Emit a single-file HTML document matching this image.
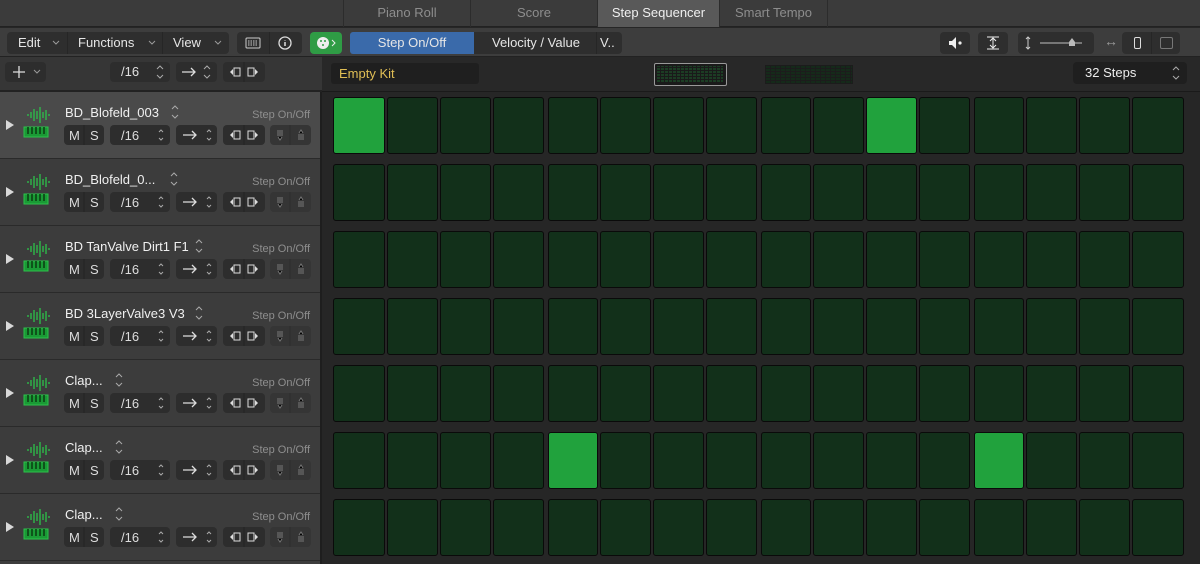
<!DOCTYPE html>
<html><head><meta charset="utf-8"><style>
*{box-sizing:border-box;margin:0;padding:0}
body{width:1200px;height:564px;overflow:hidden;background:#262626;font-family:"Liberation Sans",sans-serif;position:relative;color:#ddd}
.a{position:absolute}
.tabs{left:0;top:0;width:1200px;height:27px;background:#3b3b3b;border-bottom:1px solid #222}
.tab{top:0;height:27px;line-height:26px;text-align:center;font-size:13px;color:#8d8d8d;border-left:1px solid #2c2c2c}
.bar2{left:0;top:28px;width:1200px;height:29px;background:#3d3d3d;border-bottom:1px solid #222}
.btn{background:#2e2e2e;border-radius:4px;height:22px;top:32px;font-size:13px;color:#e6e6e6;line-height:22px}
.bar3l{left:0;top:57px;width:322px;height:35px;background:#363636;border-bottom:2px solid #222}
.bar3r{left:322px;top:57px;width:878px;height:35px;background:#282828;border-bottom:1px solid #1a1a1a}
.left{left:0;top:92px;width:322px;height:472px;background:#3c3c3c;border-right:2px solid #1e1e1e}
.row{position:absolute;left:0;width:320px;height:67px;border-bottom:1px solid #2a2a2a}
.sb{position:absolute;background:#2d2d2d;border-radius:4px;height:20px;font-size:13px;color:#e0e0e0;line-height:20px}
.name{position:absolute;left:65px;top:13px;font-size:13px;color:#f0f0f0}
.so{position:absolute;right:10px;top:17px;font-size:11px;color:#8e8e8e}
.tri{position:absolute;left:6px;top:28px;width:0;height:0;border-left:8px solid #d8d8d8;border-top:5px solid transparent;border-bottom:5px solid transparent}
.cell{position:absolute;background:#12301a;border:1px solid #0a0a0a;border-radius:3px;height:57px}
.on{background:#21a23d}
svg.i{position:absolute}
</style></head><body>
<div class="a tabs"></div>
<div class="a tab" style="left:343px;width:127px">Piano Roll</div>
<div class="a tab" style="left:470px;width:127px">Score</div>
<div class="a tab" style="left:597px;width:122px;background:#595959;color:#f0f0f0">Step Sequencer</div>
<div class="a tab" style="left:719px;width:109px;border-right:1px solid #2c2c2c">Smart Tempo</div>
<div class="a bar2"></div>
<div class="a btn" style="left:7px;width:222px">
<span style="position:absolute;left:11px">Edit</span>
<span style="position:absolute;left:60px;top:0;width:1px;height:22px;background:#262626"></span>
<span style="position:absolute;left:71px">Functions</span>
<span style="position:absolute;left:155px;top:0;width:1px;height:22px;background:#262626"></span>
<span style="position:absolute;left:166px">View</span>
<svg class="i" style="left:0;top:0" width="222" height="22"><path d="M46 9l3 3 3-3M142 9l3 3 3-3M208 9l3 3 3-3" stroke="#999" fill="none"/></svg>
</div>
<div class="a btn" style="left:237px;width:65px">
<span style="position:absolute;left:32px;top:0;width:1px;height:22px;background:#262626"></span>
<svg class="i" style="left:0;top:0" width="65" height="22"><rect x="9" y="6" width="14" height="10" rx="1" stroke="#ccc" fill="none"/><path d="M11 9h10M11 11h10M11 13h10" stroke="#ccc" stroke-dasharray="1.5 1" /><circle cx="48" cy="11" r="6" stroke="#ddd" fill="none" stroke-width="1.3"/><path d="M48 10v4M48 8v0.5" stroke="#ddd" stroke-width="1.5"/></svg>
</div>
<div class="a btn" style="left:310px;width:32px;background:#2f9c45"><svg class="i" width="32" height="22"><circle cx="13" cy="11" r="6" fill="#eee"/><circle cx="11" cy="9" r="1" fill="#2f9c45"/><circle cx="15" cy="9" r="1" fill="#2f9c45"/><circle cx="13" cy="13" r="1" fill="#2f9c45"/><path d="M22 8l3 3-3 3" stroke="#eee" fill="none"/></svg></div>
<div class="a btn" style="left:350px;width:124px;background:#3a6aaa;text-align:center;border-radius:3px 0 0 3px">Step On/Off</div>
<div class="a btn" style="left:474px;width:148px;border-radius:0 4px 4px 0"><span style="position:absolute;left:18px">Velocity / Value</span><span style="position:absolute;left:122px;top:0;width:1px;height:22px;background:#262626"></span><span style="position:absolute;left:126px">V..</span></div>
<div class="a btn" style="left:940px;width:30px"><svg class="i" width="30" height="22"><path d="M9 9h3l4-4v12l-4-4H9z" fill="#eee"/><circle cx="20" cy="11" r="1.6" fill="#eee"/></svg></div>
<div class="a btn" style="left:978px;width:30px"><svg class="i" width="30" height="22"><path d="M9 5h12M9 17h12M15 6v10M12 9l3-3 3 3M12 13l3 3 3-3" stroke="#eee" fill="none"/></svg></div>
<div class="a btn" style="left:1018px;width:76px"><svg class="i" width="76" height="22"><path d="M10 5v12M8 7l2-2 2 2M8 15l2 2 2-2" stroke="#ccc" fill="none"/><path d="M22 11h42" stroke="#777" stroke-width="2"/><path d="M51 14v-4l3-4 3 4v4z" fill="#bbb"/></svg></div>
<div class="a" style="left:1104px;top:33px;color:#999;font-size:14px">↔</div>
<div class="a btn" style="left:1122px;width:58px"><span style="position:absolute;left:12px;top:5px;width:7px;height:12px;border:1.5px solid #ddd;border-radius:2px"></span><span style="position:absolute;left:29px;top:0;width:1px;height:22px;background:#262626"></span><span style="position:absolute;left:38px;top:5px;width:13px;height:12px;border:1.5px solid #777;border-radius:2px"></span></div>
<div class="a bar3l"></div><div class="a bar3r"></div>
<div class="a sb" style="left:5px;top:62px;width:41px"><svg class="i" width="41" height="20"><path d="M8 10h12M14 4v12" stroke="#ddd" stroke-width="1.3"/><path d="M29 8l3 3 3-3" stroke="#999" fill="none"/></svg></div>
<div class="a sb" style="left:110px;top:62px;width:60px"><span style="position:absolute;left:11px">/16</span><svg class="i" width="60" height="20"><path d="M47 7l3-3 3 3M47 13l3 3 3-3" stroke="#aaa" fill="none"/></svg></div>
<div class="a sb" style="left:176px;top:62px;width:41px"><svg class="i" width="41" height="20"><path d="M6 10h13M15 6l4 4-4 4" stroke="#ddd" fill="none" stroke-width="1.3"/><path d="M28 7l3-3 3 3M28 13l3 3 3-3" stroke="#aaa" fill="none"/></svg></div>
<div class="a sb" style="left:223px;top:62px;width:42px"><svg class="i" width="42" height="20"><path d="M7 10l3-3v6z" fill="#ddd"/><rect x="11" y="6" width="6" height="8" stroke="#ddd" fill="none"/><line x1="21" y1="0" x2="21" y2="20" stroke="#222"/><rect x="25" y="6" width="6" height="8" stroke="#ddd" fill="none"/><path d="M35 10l-3-3v6z" fill="#ddd"/></svg></div>
<div class="a" style="left:331px;top:63px;width:148px;height:21px;background:#1f1f1f;border-radius:3px;color:#e0be55;font-size:13px;line-height:21px;padding-left:8px">Empty Kit</div>
<div class="a" style="left:654px;top:63px;width:73px;height:23px;border:1.5px solid #999;border-radius:2px;background:#1a1a1a"><div style="position:absolute;left:2px;top:2px;width:66px;height:16px;background:repeating-linear-gradient(90deg,transparent 0 3px,#1a1a1a 3px 4px),repeating-linear-gradient(0deg,#1c3d24 0 2px,#1a1a1a 2px 3px)"></div></div>
<div class="a" style="left:765px;top:65px;width:88px;height:19px;background:#1c1c1c"><div style="position:absolute;left:1px;top:1px;width:86px;height:17px;background:repeating-linear-gradient(90deg,transparent 0 4px,#1c1c1c 4px 5px),repeating-linear-gradient(0deg,#152a1a 0 2px,#1c1c1c 2px 3px)"></div></div>
<div class="a" style="left:1073px;top:62px;width:114px;height:22px;background:#1f1f1f;border-radius:4px;color:#eee;font-size:13px;line-height:22px;padding-left:12px">32 Steps<svg class="i" style="left:0;top:0" width="114" height="22"><path d="M100 8l3-3 3 3M100 14l3 3 3-3" stroke="#aaa" fill="none"/></svg></div>
<div class="a left">
<div class="row" style="top:0;background:#4a4a4a"><div class="tri"></div><div class="name">BD_Blofeld_003</div><div class="so">Step On/Off</div></div>
<div class="row" style="top:67px"><div class="tri"></div><div class="name">BD_Blofeld_0...</div><div class="so">Step On/Off</div></div>
<div class="row" style="top:134px"><div class="tri"></div><div class="name">BD TanValve Dirt1 F1</div><div class="so">Step On/Off</div></div>
<div class="row" style="top:201px"><div class="tri"></div><div class="name">BD 3LayerValve3 V3</div><div class="so">Step On/Off</div></div>
<div class="row" style="top:268px"><div class="tri"></div><div class="name">Clap...</div><div class="so">Step On/Off</div></div>
<div class="row" style="top:335px"><div class="tri"></div><div class="name">Clap...</div><div class="so">Step On/Off</div></div>
<div class="row" style="top:402px"><div class="tri"></div><div class="name">Clap...</div><div class="so">Step On/Off</div></div>
</div>
<svg class="a" style="left:0;top:92px" width="322" height="472">
<defs><g id="ctl">
<path d="M31 6v6M34 3v12M37 5v8M40 1v16M43 6v6M46 4v10M28 8v2M49 8v2" stroke="#2cc24a" stroke-width="1.3"/>
<rect x="24" y="21" width="24" height="10" fill="#1a9a35" stroke="#2cc24a"/>
<path d="M28 21v7M32 21v7M36 21v7M40 21v7M44 21v7" stroke="#0a3a12" stroke-width="1.5"/>
<rect x="64" y="19" width="40" height="20" rx="4" fill="#2d2d2d"/><line x1="84" y1="19" x2="84" y2="39" stroke="#222"/>
<text x="69" y="34" fill="#ddd" font-size="13" font-family="Liberation Sans">M</text><text x="90" y="34" fill="#ddd" font-size="13" font-family="Liberation Sans">S</text>
<rect x="110" y="19" width="60" height="20" rx="4" fill="#2d2d2d"/><text x="121" y="34" fill="#ddd" font-size="13" font-family="Liberation Sans">/16</text>
<path d="M159 26l2-2 2 2M159 32l2 2 2-2" stroke="#aaa" fill="none"/>
<rect x="176" y="19" width="41" height="20" rx="4" fill="#2d2d2d"/><path d="M183 29h13M192 25l4 4-4 4" stroke="#ddd" fill="none" stroke-width="1.3"/>
<path d="M207 26l2-2 2 2M207 32l2 2 2-2" stroke="#aaa" fill="none"/>
<rect x="223" y="19" width="42" height="20" rx="4" fill="#2d2d2d"/><line x1="244" y1="19" x2="244" y2="39" stroke="#222"/>
<path d="M230 29l3-3v6z" fill="#ddd"/><rect x="234" y="25" width="6" height="8" stroke="#ddd" fill="none"/>
<rect x="248" y="25" width="6" height="8" stroke="#ddd" fill="none"/><path d="M258 29l-3-3v6z" fill="#ddd"/>
<rect x="270" y="19" width="41" height="20" rx="4" fill="#353535"/><line x1="290" y1="19" x2="290" y2="39" stroke="#2d2d2d"/>
<path d="M277 25h6M277 27h6M277 29h6M278 31l2 3 2-3" stroke="#777"/><path d="M298 33h6M298 31h6M298 29h6M299 27l2-3 2 3" stroke="#777"/>
</g>
<path id="ud" d="M0 3l3-3 3 3M0 9l3 3 3-3" stroke="#aaa" fill="none"/></defs>
<use href="#ctl" y="14"/><use href="#ctl" y="81"/><use href="#ctl" y="148"/><use href="#ctl" y="215"/><use href="#ctl" y="282"/><use href="#ctl" y="349"/><use href="#ctl" y="416"/>
<use href="#ud" x="172" y="14"/><use href="#ud" x="171" y="81"/><use href="#ud" x="196" y="148"/><use href="#ud" x="196" y="215"/><use href="#ud" x="116" y="282"/><use href="#ud" x="116" y="349"/><use href="#ud" x="116" y="416"/>
</svg>
<div class="a" style="left:324px;top:92px;width:876px;height:67px">
<div class="cell on" style="left:9px;top:5px;width:52px"></div><div class="cell" style="left:63px;top:5px;width:51px"></div><div class="cell" style="left:116px;top:5px;width:51px"></div><div class="cell" style="left:169px;top:5px;width:51px"></div><div class="cell" style="left:224px;top:5px;width:50px"></div><div class="cell" style="left:276px;top:5px;width:51px"></div><div class="cell" style="left:329px;top:5px;width:51px"></div><div class="cell" style="left:382px;top:5px;width:51px"></div><div class="cell" style="left:437px;top:5px;width:50px"></div><div class="cell" style="left:489px;top:5px;width:51px"></div><div class="cell on" style="left:542px;top:5px;width:51px"></div><div class="cell" style="left:595px;top:5px;width:51px"></div><div class="cell" style="left:650px;top:5px;width:50px"></div><div class="cell" style="left:702px;top:5px;width:51px"></div><div class="cell" style="left:755px;top:5px;width:51px"></div><div class="cell" style="left:808px;top:5px;width:52px"></div>
</div>
<div class="a" style="left:324px;top:159px;width:876px;height:67px"><div class="cell" style="left:9px;top:5px;width:52px"></div><div class="cell" style="left:63px;top:5px;width:51px"></div><div class="cell" style="left:116px;top:5px;width:51px"></div><div class="cell" style="left:169px;top:5px;width:51px"></div><div class="cell" style="left:224px;top:5px;width:50px"></div><div class="cell" style="left:276px;top:5px;width:51px"></div><div class="cell" style="left:329px;top:5px;width:51px"></div><div class="cell" style="left:382px;top:5px;width:51px"></div><div class="cell" style="left:437px;top:5px;width:50px"></div><div class="cell" style="left:489px;top:5px;width:51px"></div><div class="cell" style="left:542px;top:5px;width:51px"></div><div class="cell" style="left:595px;top:5px;width:51px"></div><div class="cell" style="left:650px;top:5px;width:50px"></div><div class="cell" style="left:702px;top:5px;width:51px"></div><div class="cell" style="left:755px;top:5px;width:51px"></div><div class="cell" style="left:808px;top:5px;width:52px"></div></div>
<div class="a" style="left:324px;top:226px;width:876px;height:67px"><div class="cell" style="left:9px;top:5px;width:52px"></div><div class="cell" style="left:63px;top:5px;width:51px"></div><div class="cell" style="left:116px;top:5px;width:51px"></div><div class="cell" style="left:169px;top:5px;width:51px"></div><div class="cell" style="left:224px;top:5px;width:50px"></div><div class="cell" style="left:276px;top:5px;width:51px"></div><div class="cell" style="left:329px;top:5px;width:51px"></div><div class="cell" style="left:382px;top:5px;width:51px"></div><div class="cell" style="left:437px;top:5px;width:50px"></div><div class="cell" style="left:489px;top:5px;width:51px"></div><div class="cell" style="left:542px;top:5px;width:51px"></div><div class="cell" style="left:595px;top:5px;width:51px"></div><div class="cell" style="left:650px;top:5px;width:50px"></div><div class="cell" style="left:702px;top:5px;width:51px"></div><div class="cell" style="left:755px;top:5px;width:51px"></div><div class="cell" style="left:808px;top:5px;width:52px"></div></div>
<div class="a" style="left:324px;top:293px;width:876px;height:67px"><div class="cell" style="left:9px;top:5px;width:52px"></div><div class="cell" style="left:63px;top:5px;width:51px"></div><div class="cell" style="left:116px;top:5px;width:51px"></div><div class="cell" style="left:169px;top:5px;width:51px"></div><div class="cell" style="left:224px;top:5px;width:50px"></div><div class="cell" style="left:276px;top:5px;width:51px"></div><div class="cell" style="left:329px;top:5px;width:51px"></div><div class="cell" style="left:382px;top:5px;width:51px"></div><div class="cell" style="left:437px;top:5px;width:50px"></div><div class="cell" style="left:489px;top:5px;width:51px"></div><div class="cell" style="left:542px;top:5px;width:51px"></div><div class="cell" style="left:595px;top:5px;width:51px"></div><div class="cell" style="left:650px;top:5px;width:50px"></div><div class="cell" style="left:702px;top:5px;width:51px"></div><div class="cell" style="left:755px;top:5px;width:51px"></div><div class="cell" style="left:808px;top:5px;width:52px"></div></div>
<div class="a" style="left:324px;top:360px;width:876px;height:67px"><div class="cell" style="left:9px;top:5px;width:52px"></div><div class="cell" style="left:63px;top:5px;width:51px"></div><div class="cell" style="left:116px;top:5px;width:51px"></div><div class="cell" style="left:169px;top:5px;width:51px"></div><div class="cell" style="left:224px;top:5px;width:50px"></div><div class="cell" style="left:276px;top:5px;width:51px"></div><div class="cell" style="left:329px;top:5px;width:51px"></div><div class="cell" style="left:382px;top:5px;width:51px"></div><div class="cell" style="left:437px;top:5px;width:50px"></div><div class="cell" style="left:489px;top:5px;width:51px"></div><div class="cell" style="left:542px;top:5px;width:51px"></div><div class="cell" style="left:595px;top:5px;width:51px"></div><div class="cell" style="left:650px;top:5px;width:50px"></div><div class="cell" style="left:702px;top:5px;width:51px"></div><div class="cell" style="left:755px;top:5px;width:51px"></div><div class="cell" style="left:808px;top:5px;width:52px"></div></div>
<div class="a" style="left:324px;top:427px;width:876px;height:67px"><div class="cell" style="left:9px;top:5px;width:52px"></div><div class="cell" style="left:63px;top:5px;width:51px"></div><div class="cell" style="left:116px;top:5px;width:51px"></div><div class="cell" style="left:169px;top:5px;width:51px"></div><div class="cell on" style="left:224px;top:5px;width:50px"></div><div class="cell" style="left:276px;top:5px;width:51px"></div><div class="cell" style="left:329px;top:5px;width:51px"></div><div class="cell" style="left:382px;top:5px;width:51px"></div><div class="cell" style="left:437px;top:5px;width:50px"></div><div class="cell" style="left:489px;top:5px;width:51px"></div><div class="cell" style="left:542px;top:5px;width:51px"></div><div class="cell" style="left:595px;top:5px;width:51px"></div><div class="cell on" style="left:650px;top:5px;width:50px"></div><div class="cell" style="left:702px;top:5px;width:51px"></div><div class="cell" style="left:755px;top:5px;width:51px"></div><div class="cell" style="left:808px;top:5px;width:52px"></div></div>
<div class="a" style="left:324px;top:494px;width:876px;height:67px"><div class="cell" style="left:9px;top:5px;width:52px"></div><div class="cell" style="left:63px;top:5px;width:51px"></div><div class="cell" style="left:116px;top:5px;width:51px"></div><div class="cell" style="left:169px;top:5px;width:51px"></div><div class="cell" style="left:224px;top:5px;width:50px"></div><div class="cell" style="left:276px;top:5px;width:51px"></div><div class="cell" style="left:329px;top:5px;width:51px"></div><div class="cell" style="left:382px;top:5px;width:51px"></div><div class="cell" style="left:437px;top:5px;width:50px"></div><div class="cell" style="left:489px;top:5px;width:51px"></div><div class="cell" style="left:542px;top:5px;width:51px"></div><div class="cell" style="left:595px;top:5px;width:51px"></div><div class="cell" style="left:650px;top:5px;width:50px"></div><div class="cell" style="left:702px;top:5px;width:51px"></div><div class="cell" style="left:755px;top:5px;width:51px"></div><div class="cell" style="left:808px;top:5px;width:52px"></div></div>
</body></html>
